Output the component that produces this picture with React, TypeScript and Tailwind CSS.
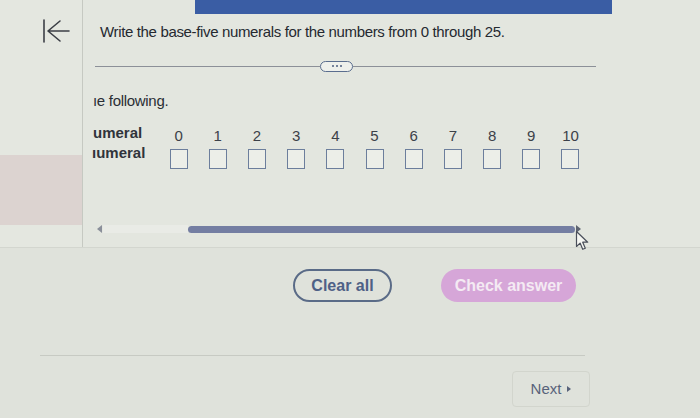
const COLUMNS = [0, 1, 2, 3, 4, 5, 6, 7, 8, 9, 10]

function BackIcon() {
  return (
    <svg width="30" height="26" viewBox="0 0 30 26" fill="none" className="text-[#3b3f46]">
      <path d="M2 1v22" stroke="currentColor" strokeWidth="1.6" strokeLinecap="round" />
      <path d="M18 2 6 12l12 10M6 12h21" stroke="currentColor" strokeWidth="1.6" strokeLinecap="round" strokeLinejoin="round" />
    </svg>
  )
}

function Cursor() {
  return (
    <svg width="16" height="22" viewBox="0 0 16 22" className="absolute left-[575px] top-[230px]">
      <path d="M1.5 1.5v15l3.6-3.4 2.6 6.2 2.6-1.1-2.6-6h5z" fill="#f5f6f2" stroke="#4a4f5a" strokeWidth="1.2" strokeLinejoin="round" />
    </svg>
  )
}

export default function App() {
  return (
    <div
      className="relative flex h-[418px] w-[700px] flex-col overflow-hidden bg-[#dfe2db] text-[#262a31]"
      style={{ fontFamily: '"Liberation Sans", Arial, sans-serif' }}
    >
      <div className="flex h-[248px] border-b border-[#d3d6cf] bg-[#e3e6df]">
        <aside className="flex w-[83px] shrink-0 flex-col border-r border-[#c6c9c2] bg-[#e4e7e0]">
          <div className="h-[78px] pl-[42px] pt-[19px]">
            <BackIcon />
          </div>
          <div className="mt-[77px] h-[70px] bg-[#dcd3d0]" />
        </aside>

        <div className="flex min-w-0 flex-1 flex-col">
          <div className="ml-[112px] h-[14px] w-[417px] bg-[#3a5da4]" />
          <p className="ml-[17px] mt-[9px] whitespace-nowrap text-[15px] leading-[18px] tracking-[-0.35px] text-[#252930]">
            Write the base-five numerals for the numbers from 0 through 25.
          </p>

          <div className="ml-[12px] mt-[20px] flex h-[10px] items-center">
            <div className="h-px w-[225px] bg-[#8c9098]" />
            <button className="flex h-[11px] w-[33px] items-center justify-center gap-[2px] rounded-full border-[1.5px] border-[#5a6d8e] bg-[#eef0ec]">
              <span className="h-[2px] w-[2px] rounded-full bg-[#4d5f80]" />
              <span className="h-[2px] w-[2px] rounded-full bg-[#4d5f80]" />
              <span className="h-[2px] w-[2px] rounded-full bg-[#4d5f80]" />
            </button>
            <div className="h-px w-[243px] bg-[#8c9098]" />
          </div>

          <p className="ml-[10px] mt-[21px] whitespace-nowrap text-[15px] leading-[18px] tracking-[-0.3px] text-[#2a2e35]">
            ıe following.
          </p>

          <div className="ml-[10px] mt-[14px] whitespace-nowrap">
            <div className="flex h-[22px] items-start">
              <div className="w-[66px] shrink-0 text-[15px] font-bold leading-[18px] text-[#30343b]">umeral</div>
              {COLUMNS.map((n) => (
                <div key={n} className="mt-[3px] w-[39.2px] shrink-0 text-center text-[15px] leading-[18px] text-[#3c4149]">
                  {n}
                </div>
              ))}
            </div>
            <div className="-mt-[2px] flex items-start">
              <div className="-ml-[1px] w-[67px] shrink-0 text-[15px] font-bold leading-[17px] text-[#30343b]">ıumeral</div>
              {COLUMNS.map((n) => (
                <div key={n} className="flex w-[39.2px] shrink-0 justify-center pt-[5px]">
                  <div className="h-[20px] w-[18px] border-[1.5px] border-[#6c7e9c] bg-[#eceee8]" />
                </div>
              ))}
            </div>
          </div>

          <div className="ml-[14px] mt-[55px] flex h-[10px] items-center">
            <span className="h-0 w-0 border-y-[4px] border-r-[5px] border-y-transparent border-r-[#8a8f9a]" />
            <div className="ml-[1px] h-[8px] w-[85px] bg-[#e9ebe6]" />
            <div className="h-[7px] w-[387px] rounded-full bg-[#747ea2]" />
            <span className="ml-[1px] h-0 w-0 border-y-[4px] border-l-[5px] border-y-transparent border-l-[#5d6370]" />
          </div>
        </div>
      </div>

      <div className="mt-[21px] flex items-center pl-[293px]">
        <button className="h-[33px] w-[99px] rounded-full border-2 border-[#5a6b87] text-[16px] font-bold text-[#4e6086]">
          Clear all
        </button>
        <button className="ml-[49px] h-[33px] w-[135px] rounded-full bg-[#d6a6d8] text-[16px] font-bold text-[#f4eaf3]">
          Check answer
        </button>
      </div>

      <div className="ml-[40px] mt-[53px] h-px w-[545px] bg-[#c7cac3]" />

      <div className="mt-[15px] flex pl-[512px]">
        <button className="flex h-[36px] w-[78px] items-center justify-center gap-[6px] rounded-sm border border-[#d2d5cd] text-[15px] text-[#58627a]">
          Next
          <span className="h-0 w-0 border-y-[3px] border-l-[4px] border-y-transparent border-l-[#58627a]" />
        </button>
      </div>

      <Cursor />
    </div>
  )
}
